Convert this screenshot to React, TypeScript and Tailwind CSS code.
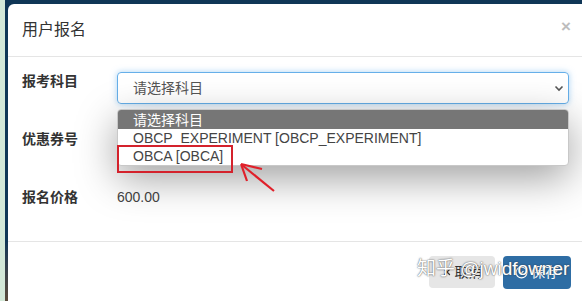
import { X, CircleCheck } from "lucide-react";

const cjk = "font-['Liberation_Sans','Noto_Sans_CJK_SC',sans-serif]";

export default function App() {
  return (
    <div className={`relative flex h-[301px] w-[582px] overflow-hidden bg-[#d3e8d8] text-[14px] text-[#333] ${cjk}`}>
      <div className="ml-[5px] flex flex-1 bg-gradient-to-b from-[#0f3656] from-80% to-[#5b4a3a] pl-[3px] pt-[4px]">
        <div className="flex flex-1 flex-col rounded-tl-[6px] bg-white">
          {/* header */}
          <div className="flex h-[53px] shrink-0 items-center justify-between border-b border-[#e5e5e5] pl-[14px] pr-[11px]">
            <h4 className="text-[16px] leading-none text-[#333]">用户报名</h4>
            <span className="-mt-[8px] text-[17px] font-bold leading-none text-[#bdbdbd]">×</span>
          </div>

          {/* body */}
          <div className="flex flex-col gap-[26px] border-b border-[#e5e5e5] pb-[21px] pl-[14px] pt-[15px]">
            <div className="flex items-start">
              <label className="w-[95px] shrink-0 font-bold leading-[18px]">报考科目</label>
              <div className="relative w-[452px]">
                <div className="flex h-[32px] items-center justify-between rounded-[4px] border border-[#66afe9] pl-[15px] pr-[3px] shadow-[0_0_6px_rgba(102,175,233,0.55)]">
                  <span className="text-[#555]">请选择科目</span>
                  <svg width="10" height="7" viewBox="0 0 10 7" className="mr-[1px]">
                    <path d="M1.5 1.5 L5 5 L8.5 1.5" fill="none" stroke="#555" strokeWidth="1.6" />
                  </svg>
                </div>
                <div className="absolute left-0 top-[37px] z-10 w-[452px] overflow-hidden rounded-[4px] border border-[#c8c8c8] bg-white shadow-[0_12px_40px_rgba(0,0,0,0.38)]">
                  <div className="flex h-[19px] items-center bg-[#767676] pl-[15px] leading-none text-white">请选择科目</div>
                  <div className="flex h-[18px] items-center pl-[15px] leading-none text-[#444]">OBCP_EXPERIMENT [OBCP_EXPERIMENT]</div>
                  <div className="flex h-[18px] items-center pl-[15px] leading-none text-[#444]">OBCA [OBCA]</div>
                </div>
              </div>
            </div>
            <div className="flex h-[32px] items-start">
              <label className="w-[95px] shrink-0 font-bold leading-[18px]">优惠券号</label>
              <div className="h-[32px] w-[452px] rounded-[4px] border border-[#ccc]" />
            </div>
            <div className="flex h-[32px] items-start">
              <label className="w-[95px] shrink-0 font-bold leading-[18px]">报名价格</label>
              <span className="leading-[18px] text-[#444]">600.00</span>
            </div>
          </div>

          {/* footer */}
          <div className="flex justify-end gap-[8px] pr-[11px] pt-[14px]">
            <button className="flex h-[32px] w-[66px] items-center justify-center gap-[3px] rounded-[4px] bg-[#e6e6e6] text-[#333]">
              <X className="h-[10px] w-[10px]" strokeWidth={3} />
              取消
            </button>
            <button className="flex h-[33px] w-[68px] items-center justify-center gap-[3px] rounded-[4px] bg-[#2e6da4] text-white">
              <CircleCheck className="h-[13px] w-[13px]" strokeWidth={2.2} />
              保存
            </button>
          </div>
        </div>
      </div>

      {/* annotation: red box */}
      <div className="absolute left-[117px] top-[145px] z-20 h-[28px] w-[116px] border-2 border-[#d4222c]" />

      {/* annotation: arrow */}
      <svg className="absolute left-0 top-0 z-20" width="582" height="301">
        <path d="M274 191 L242 165" stroke="#e0202a" strokeWidth="2.2" fill="none" />
        <path d="M241 164 L262 169 M241 164 L247 181" stroke="#e0202a" strokeWidth="2.2" fill="none" />
      </svg>

      {/* watermark */}
      <div className="absolute left-[417px] top-[259px] z-30 whitespace-nowrap text-[19px] leading-none text-white [text-shadow:0_0_1px_#666,0_0_2px_rgba(0,0,0,0.5)]">
        知乎 @jwidfowner
      </div>
    </div>
  );
}
